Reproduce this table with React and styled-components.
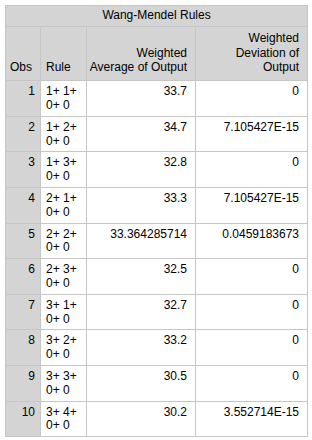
import styled, { createGlobalStyle } from 'styled-components'

const GlobalStyle = createGlobalStyle`
    body {
        margin: 0;
        background: #ffffff;
        font-family: "Liberation Sans", Arial, sans-serif;
    }
`

const rows = [
    { obs: 1, rule: ['1+ 1+', '0+ 0'], avg: '33.7', dev: '0' },
    { obs: 2, rule: ['1+ 2+', '0+ 0'], avg: '34.7', dev: '7.105427E-15' },
    { obs: 3, rule: ['1+ 3+', '0+ 0'], avg: '32.8', dev: '0' },
    { obs: 4, rule: ['2+ 1+', '0+ 0'], avg: '33.3', dev: '7.105427E-15' },
    { obs: 5, rule: ['2+ 2+', '0+ 0'], avg: '33.364285714', dev: '0.0459183673' },
    { obs: 6, rule: ['2+ 3+', '0+ 0'], avg: '32.5', dev: '0' },
    { obs: 7, rule: ['3+ 1+', '0+ 0'], avg: '32.7', dev: '0' },
    { obs: 8, rule: ['3+ 2+', '0+ 0'], avg: '33.2', dev: '0' },
    { obs: 9, rule: ['3+ 3+', '0+ 0'], avg: '30.5', dev: '0' },
    { obs: 10, rule: ['3+ 4+', '0+ 0'], avg: '30.2', dev: '3.552714E-15' },
]

export default function App() {
    return (
        <>
            <GlobalStyle />
            <Wrapper>
                <Table>
                    <colgroup>
                        <col style={{ width: 35 }} />
                        <col style={{ width: 46 }} />
                        <col style={{ width: 109 }} />
                        <col style={{ width: 112 }} />
                    </colgroup>
                    <thead>
                        <tr>
                            <Title colSpan={4}>Wang-Mendel Rules</Title>
                        </tr>
                        <tr>
                            <HeadCell $align="right">Obs</HeadCell>
                            <HeadCell $align="left">Rule</HeadCell>
                            <HeadCell $align="right">Weighted<br />Average of Output</HeadCell>
                            <HeadCell $align="right">Weighted<br />Deviation of<br />Output</HeadCell>
                        </tr>
                    </thead>
                    <tbody>
                        {rows.map(r => (
                            <tr key={r.obs}>
                                <ObsCell>{r.obs}</ObsCell>
                                <Cell $align="left">{r.rule[0]}<br />{r.rule[1]}</Cell>
                                <Cell $align="right" $num>{r.avg}</Cell>
                                <Cell $align="right" $num>{r.dev}</Cell>
                            </tr>
                        ))}
                    </tbody>
                </Table>
            </Wrapper>
        </>
    )
}

const Wrapper = styled.div`
    padding: 5px;
`

const Table = styled.table`
    border-collapse: collapse;
    table-layout: fixed;
    width: 302px;
    font-size: 12px;
    color: #000;
    border: 1px solid #c6c6c6;
`

const Title = styled.th`
    background: #d4d4d4;
    border: 1px solid #c6c6c6;
    font-weight: normal;
    text-align: center;
    padding: 3px 6px 3px;
    line-height: 13.8px;
`

const HeadCell = styled.th`
    background: #d4d4d4;
    border: 1px solid #c6c6c6;
    font-weight: normal;
    text-align: ${p => p.$align};
    vertical-align: bottom;
    padding: ${p => p.$align === 'left' ? '4px 5px 5px 5px' : '4px 8px 5px 2px'};
    line-height: 14.8px;
    white-space: nowrap;
`

const ObsCell = styled.td`
    background: #d4d4d4;
    border: 1px solid #c6c6c6;
    text-align: right;
    vertical-align: top;
    padding: 4px 5px 3px 5px;
    line-height: 13.8px;
`

const Cell = styled.td`
    background: #ffffff;
    border: 1px solid #c6c6c6;
    text-align: ${p => p.$align};
    vertical-align: top;
    padding: ${p => p.$num ? '4px 8px 3px 5px' : '4px 5px 3px 5px'};
    line-height: 13.8px;
    white-space: nowrap;
`
